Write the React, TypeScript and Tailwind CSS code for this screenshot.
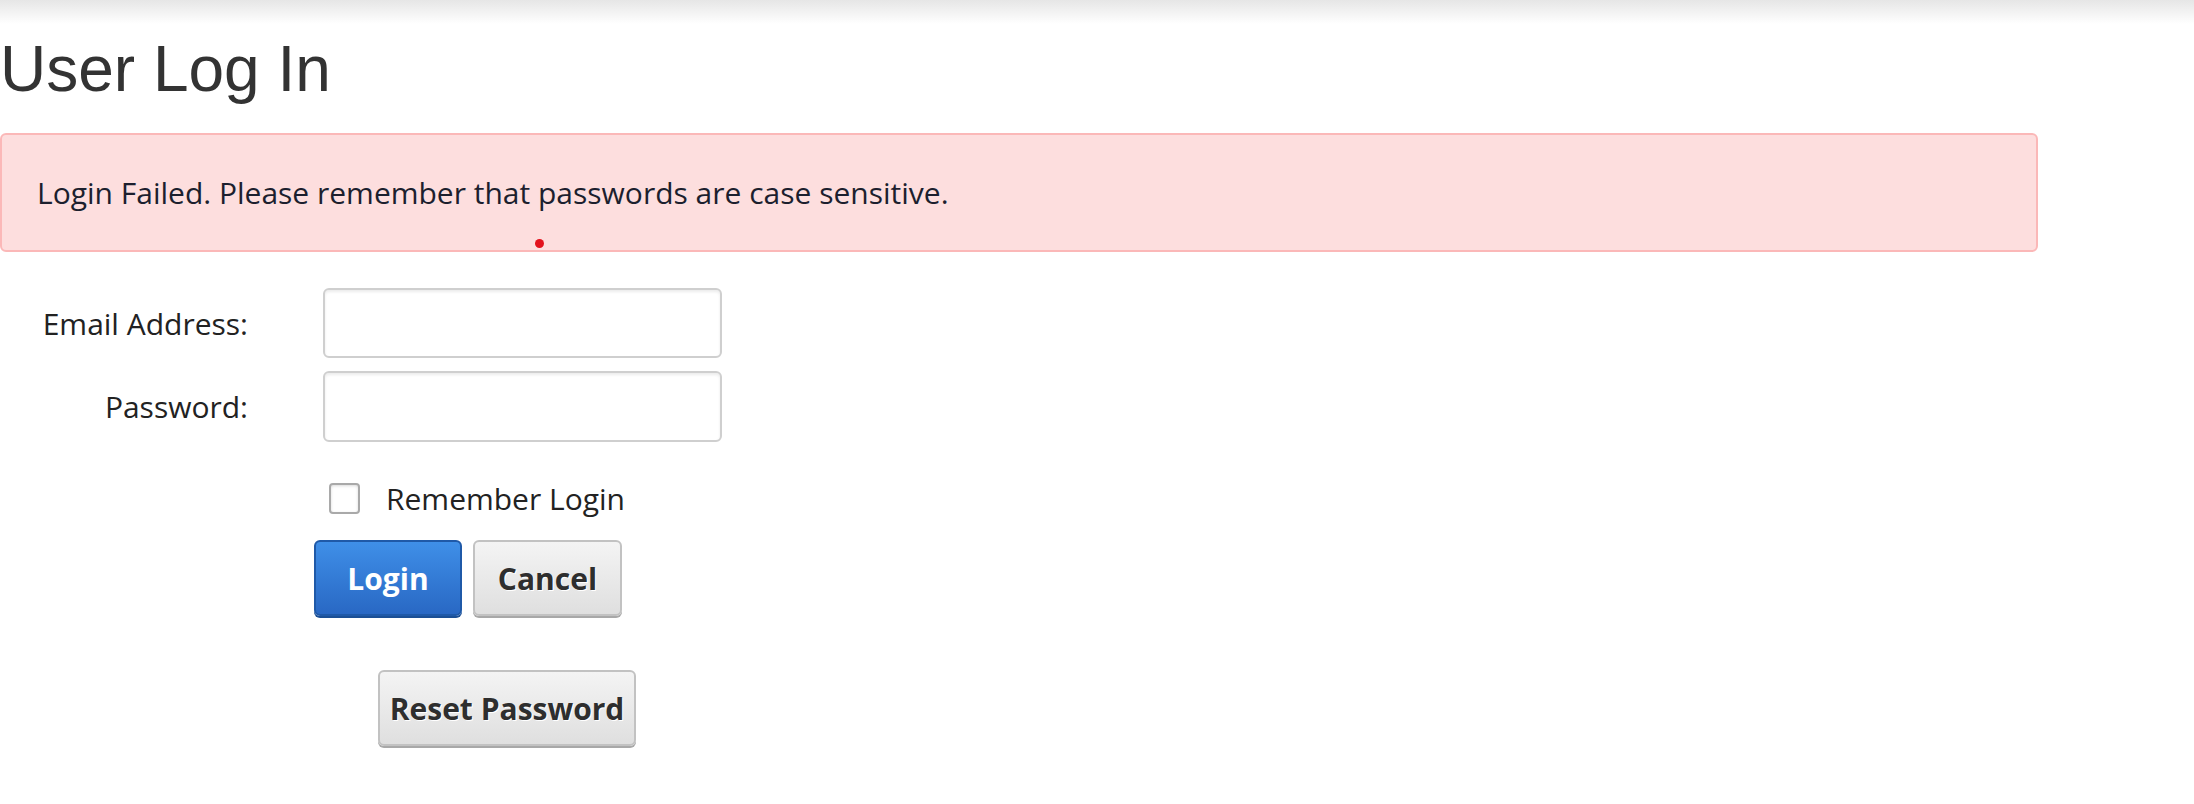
import { useState } from 'react';

const body = { fontFamily: '"Open Sans", "Noto Sans", sans-serif' };

export default function App() {
  const [email, setEmail] = useState('');
  const [password, setPassword] = useState('');
  const [remember, setRemember] = useState(false);

  return (
    <div className="min-h-screen w-full bg-white text-[#222]" style={body}>
      <div className="h-[24px] bg-linear-to-b from-[#e6e6e6] to-white" />

      <h1
        className="mt-[13px] text-[64px] leading-[64px] text-[#333] font-normal"
        style={{ fontFamily: '"Liberation Sans", Arial, sans-serif' }}
      >
        User Log In
      </h1>

      <div className="relative mt-[32px] w-[2038px] h-[119px] flex items-center pl-[35px] bg-[#fddede] border-2 border-[#fbb8b8] rounded-[6px]">
        <p className="text-[30px] text-[#1c1f2e]">
          Login Failed. Please remember that passwords are case sensitive.
        </p>
        <span className="absolute left-[533px] bottom-[2px] w-[9px] h-[9px] rounded-full bg-[#e3121d]" />
      </div>

      <form className="mt-[36px]" onSubmit={(e) => e.preventDefault()}>
        <div className="grid grid-cols-[248px_399px] gap-x-[75px] gap-y-[13px] items-center">
          <label className="text-right text-[30px]">Email Address:</label>
          <input
            className="h-[70px] w-[399px] rounded-[6px] border-2 border-[#cfcfcf] bg-white px-3 text-[26px] shadow-[inset_0_2px_3px_rgba(0,0,0,0.08)] outline-none"
            value={email}
            onChange={(e) => setEmail(e.target.value)}
          />
          <label className="text-right text-[30px]">Password:</label>
          <input
            type="password"
            className="h-[71px] w-[399px] rounded-[6px] border-2 border-[#cfcfcf] bg-white px-3 text-[26px] shadow-[inset_0_2px_3px_rgba(0,0,0,0.08)] outline-none"
            value={password}
            onChange={(e) => setPassword(e.target.value)}
          />
        </div>

        <label className="mt-[34px] ml-[329px] flex items-center gap-[26px] cursor-pointer w-fit">
          <span
            className={`w-[31px] h-[31px] rounded-[4px] border-2 border-[#a9a9a9] shadow-[inset_0_1px_3px_rgba(0,0,0,0.15)] ${remember ? 'bg-[#2a6cc6]' : 'bg-white'}`}
            onClick={() => setRemember(!remember)}
          />
          <span className="text-[30px]">Remember Login</span>
        </label>

        <div className="mt-[19px] ml-[314px] flex gap-[11px]">
          <button
            type="submit"
            className="w-[148px] h-[76px] rounded-[6px] border-2 border-[#1f59a8] bg-linear-to-b from-[#3f8fe8] to-[#2968c4] text-white text-[30px] font-bold shadow-[0_2px_0_#1b4f95]"
          >
            Login
          </button>
          <button
            type="button"
            className="w-[149px] h-[76px] rounded-[6px] border-2 border-[#c2c2c2] bg-linear-to-b from-[#f4f4f4] to-[#dfdfdf] text-[#2e2e2e] text-[30px] font-bold shadow-[0_2px_0_#a8a8a8] [text-shadow:1px_1px_0_#fff]"
          >
            Cancel
          </button>
        </div>

        <button
          type="button"
          className="mt-[54px] ml-[378px] w-[258px] h-[76px] rounded-[6px] border-2 border-[#c2c2c2] bg-linear-to-b from-[#f4f4f4] to-[#dfdfdf] text-[#2e2e2e] text-[30px] font-bold shadow-[0_2px_0_#a8a8a8] [text-shadow:1px_1px_0_#fff]"
        >
          Reset Password
        </button>
      </form>
    </div>
  );
}
